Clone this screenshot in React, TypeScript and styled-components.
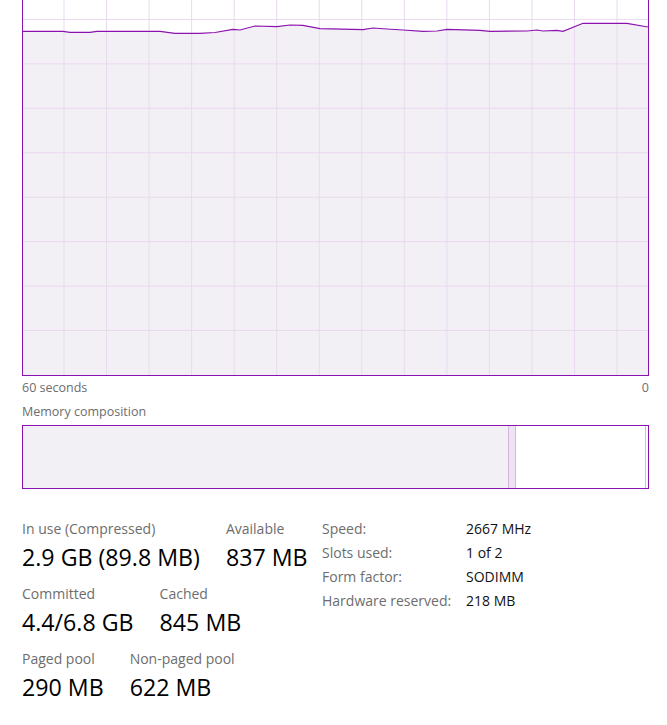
import React from "react";
import styled, { createGlobalStyle } from "styled-components";

const PURPLE = "#8b12ae";
const GRID = "#ead9ef";
const FILL = "#f3f0f5";

const GlobalStyle = createGlobalStyle`
  html, body {
    margin: 0;
    padding: 0;
    background: #ffffff;
    font-family: "Segoe UI", "Open Sans", "Noto Sans", sans-serif;
    overflow: hidden;
  }
`;

// usage history, page coords (x, y)
const history: [number, number][] = [
  [22, 31.3], [63, 31.3], [70, 32.3], [90, 32.3], [97, 31.3], [160, 31.3],
  [175, 33.3], [200, 33.3], [215, 32.5], [233, 29.3], [240, 30], [255, 26],
  [277, 26.7], [290, 25], [303, 25.3], [320, 28.7], [363, 29.7], [373, 28],
  [387, 29], [403, 30], [423, 31.3], [437, 31], [447, 29.3], [480, 30.3],
  [490, 31.3], [527, 31], [537, 30], [543, 31], [557, 30.3], [563, 31.3],
  [583, 23.3], [627, 23.3], [648, 27],
];

const CHART_W = 625;
const CHART_H = 400;

const UsageChart = () => {
  const pts = history.map(([x, y]) => [x - 23, y + 25]);
  const line = pts.map(([x, y], i) => `${i ? "L" : "M"}${x} ${y}`).join(" ");
  const area = `${line} L${CHART_W} ${CHART_H} L0 ${CHART_H} Z`;
  const rows = Array.from({ length: 8 }, (_, i) => (CHART_H / 9) * (i + 1));
  const cols = Array.from({ length: 14 }, (_, i) => 41 + i * 42.54);
  return (
    <ChartFrame>
      <svg width={CHART_W} height={CHART_H} viewBox={`0 0 ${CHART_W} ${CHART_H}`}>
        <path d={area} fill={FILL} />
        {rows.map((y) => (
          <line key={y} x1={0} x2={CHART_W} y1={y} y2={y} stroke={GRID} strokeWidth={1} />
        ))}
        {cols.map((x) => (
          <line key={x} x1={x} x2={x} y1={0} y2={CHART_H} stroke={GRID} strokeWidth={1} />
        ))}
        <path d={line} fill="none" stroke={PURPLE} strokeWidth={1.2} />
      </svg>
    </ChartFrame>
  );
};

const composition = [
  { key: "inuse", width: 486, fill: FILL, edge: true },
  { key: "modified", width: 7, fill: "#eee3f3", edge: true },
  { key: "standby", width: 130, fill: "#ffffff", edge: true },
  { key: "free", width: 2, fill: "#ffffff", edge: false },
];

const stats = [
  [
    { label: "In use (Compressed)", value: "2.9 GB (89.8 MB)" },
    { label: "Available", value: "837 MB" },
  ],
  [
    { label: "Committed", value: "4.4/6.8 GB" },
    { label: "Cached", value: "845 MB" },
  ],
  [
    { label: "Paged pool", value: "290 MB" },
    { label: "Non-paged pool", value: "622 MB" },
  ],
];

const details = [
  ["Speed:", "2667 MHz"],
  ["Slots used:", "1 of 2"],
  ["Form factor:", "SODIMM"],
  ["Hardware reserved:", "218 MB"],
];

export default function App() {
  return (
    <>
      <GlobalStyle />
      <Page>
        <UsageChart />
        <AxisRow>
          <span>60 seconds</span>
          <span>0</span>
        </AxisRow>
        <Caption>Memory composition</Caption>
        <CompositionBar>
          {composition.map((s) => (
            <Segment key={s.key} $width={s.width} $fill={s.fill} $edge={s.edge} />
          ))}
        </CompositionBar>
        <StatsArea>
          <StatBlock>
            {stats.map((row, i) => (
              <StatRow key={i}>
                {row.map((s) => (
                  <Stat key={s.label}>
                    <StatLabel>{s.label}</StatLabel>
                    <StatValue>{s.value}</StatValue>
                  </Stat>
                ))}
              </StatRow>
            ))}
          </StatBlock>
          <DetailTable>
            {details.map(([k, v]) => (
              <React.Fragment key={k}>
                <DetailKey>{k}</DetailKey>
                <DetailValue>{v}</DetailValue>
              </React.Fragment>
            ))}
          </DetailTable>
        </StatsArea>
      </Page>
    </>
  );
}

const Page = styled.div`
  width: 627px;
  padding-left: 22px;
  display: flex;
  flex-direction: column;
`;

const ChartFrame = styled.div`
  margin-top: -26px;
  width: ${CHART_W}px;
  height: ${CHART_H}px;
  border: 1px solid ${PURPLE};
  svg {
    display: block;
  }
`;

const AxisRow = styled.div`
  margin-top: 4px;
  display: flex;
  justify-content: space-between;
  font-size: 12.5px;
  line-height: 16px;
  color: #6d6d6d;
`;

const Caption = styled.div`
  margin-top: 8px;
  font-size: 12.5px;
  line-height: 16px;
  color: #6d6d6d;
`;

const CompositionBar = styled.div`
  margin-top: 5px;
  height: 62px;
  border: 1px solid ${PURPLE};
  display: flex;
`;

const Segment = styled.div<{ $width: number; $fill: string; $edge: boolean }>`
  box-sizing: border-box;
  width: ${(p) => p.$width}px;
  background: ${(p) => p.$fill};
  border-right: ${(p) => (p.$edge ? "1px solid #d3b6de" : "none")};
`;

const StatsArea = styled.div`
  margin-top: 31px;
  display: grid;
  grid-template-columns: 300px 1fr;
  align-items: start;
`;

const StatBlock = styled.div`
  display: flex;
  flex-direction: column;
  gap: 13.5px;
`;

const StatRow = styled.div`
  display: flex;
  gap: 26px;
`;

const Stat = styled.div`
  display: flex;
  flex-direction: column;
  gap: 3.5px;
  white-space: nowrap;
`;

const StatLabel = styled.div`
  font-size: 14px;
  line-height: 18px;
  color: #6d6d6d;
`;

const StatValue = styled.div`
  font-size: 23.2px;
  line-height: 30px;
  color: #000000;
`;

const DetailTable = styled.div`
  margin-top: -3px;
  display: grid;
  grid-template-columns: 144px auto;
  font-size: 14px;
  line-height: 24px;
  white-space: nowrap;
`;

const DetailKey = styled.div`
  color: #6d6d6d;
`;

const DetailValue = styled.div`
  color: #111111;
`;
